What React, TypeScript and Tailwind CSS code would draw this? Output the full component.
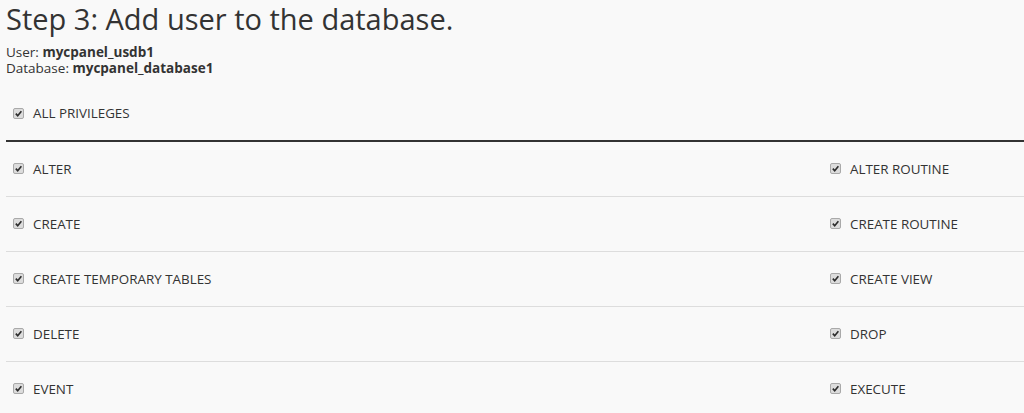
const rows: [string, string][] = [
  ["ALTER", "ALTER ROUTINE"],
  ["CREATE", "CREATE ROUTINE"],
  ["CREATE TEMPORARY TABLES", "CREATE VIEW"],
  ["DELETE", "DROP"],
  ["EVENT", "EXECUTE"],
];

const Check = ({ label }: { label: string }) => (
  <label className="flex items-center gap-[9px] pl-[7px] text-[13.4px] text-[#333]">
    <span className="flex h-[11px] w-[11px] items-center justify-center rounded-[2px] border border-[#a9a9a9] bg-[#dcdcdc]">
      <svg viewBox="0 0 10 10" className="h-[9px] w-[9px]">
        <path d="M2 5.2 L4.1 7.4 L8.2 2.4" fill="none" stroke="#2b2b2b" strokeWidth="1.8" />
      </svg>
    </span>
    {label}
  </label>
);

export default function App() {
  return (
    <div className="h-[413px] overflow-hidden bg-[#f9f9f9] pl-[6px] font-['Open_Sans',sans-serif] text-[#333]">
      <h1 className="pt-[1px] text-[29px] leading-[36px] font-normal">Step 3: Add user to the database.</h1>
      <div className="mt-[7px] text-[13.5px] leading-[16px]">
        <div>
          User: <b className="font-bold">mycpanel_usdb1</b>
        </div>
        <div>
          Database: <b className="font-bold">mycpanel_database1</b>
        </div>
      </div>
      <div className="mt-[11px] flex h-[55px] items-center border-b-2 border-[#333]">
        <Check label="ALL PRIVILEGES" />
      </div>
      {rows.map(([a, b]) => (
        <div key={a} className="grid h-[55px] grid-cols-[817px_1fr] items-center border-b border-[#ddd]">
          <Check label={a} />
          <Check label={b} />
        </div>
      ))}
    </div>
  );
}
